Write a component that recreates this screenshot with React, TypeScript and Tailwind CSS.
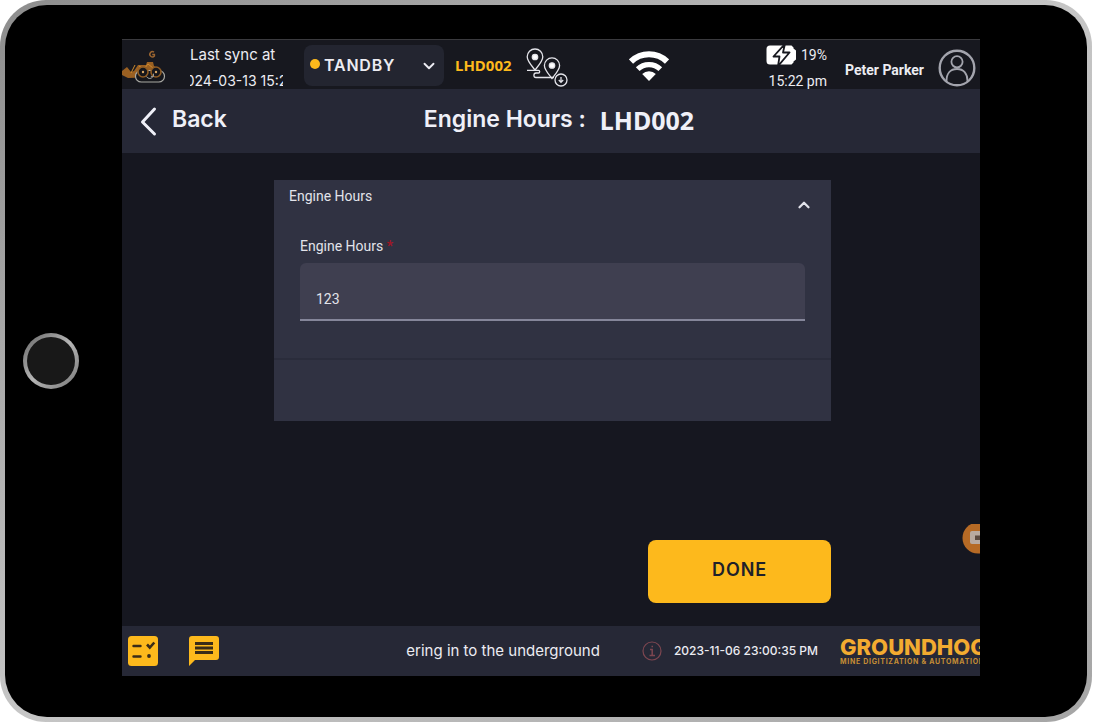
import { useState } from "react";
import { ChevronDown, ChevronUp } from "lucide-react";

function LoaderLogo() {
  return (
    <svg viewBox="0 0 44 38" className="h-[38px] w-11 shrink-0" aria-hidden="true">
      <path d="M32 3.200a2.600 2.600 0 1 0 .4 3.800V5.500h-2.200" fill="none" stroke="#9a6430" strokeWidth="1.500" />
      <path d="M0 26V22l5-4 4 5 3-1 4-6h8l1-3h6l1 4 6 4 2 6-4 1-30 1z" fill="#9a6022" />
      <path d="M9 24l4-8M17 17l5 3 4-5 5 4" stroke="#d08a2c" strokeWidth="1" fill="none" />
      <rect x="13.500" y="21.500" width="29" height="11.500" rx="5.700" fill="#15161b" stroke="#a9a9a4" strokeWidth="1.200" />
      <circle cx="21" cy="23" r="5" fill="#15161b" stroke="#8f5c24" strokeWidth="1.600" />
      <circle cx="34" cy="23" r="5" fill="#15161b" stroke="#8f5c24" strokeWidth="1.600" />
      <circle cx="21" cy="23" r="1.200" fill="#d9a766" />
      <circle cx="34" cy="23" r="1.200" fill="#d9a766" />
      <path d="M24.500 27.500a3.600 3.600 0 0 0 6.600-.3M31.500 24.600v2.800h-2.600" fill="none" stroke="#9a9a96" strokeWidth="1" />
    </svg>
  );
}

function RouteIcon() {
  return (
    <svg viewBox="0 0 42 40" className="h-10 w-[42px] shrink-0" fill="none" stroke="#e4e4ea" strokeWidth="1.300" aria-hidden="true">
      <path d="M9 22C5 17 1.200 13 1.200 8.800a7.800 7.800 0 0 1 15.600 0C16.800 13 13 17 9 22z" />
      <path d="M26 30.500c-4-5-7.600-8.800-7.600-13a7.600 7.600 0 0 1 15.200 0c0 4.200-3.600 8-7.600 13z" />
      <circle cx="9" cy="9" r="2.700" fill="#fff" />
      <circle cx="26" cy="17.500" r="2.700" fill="#fff" />
      <path d="M1 22.300h11.500c1.600 0 1.600 2.700 0 2.700H10c-2.800 0-2.800 4.500 0 4.500h18" />
      <circle cx="35" cy="32" r="6" />
      <path d="M35 29v5M32.800 32l2.200 2.400 2.200-2.400" />
    </svg>
  );
}

function WifiIcon() {
  return (
    <svg viewBox="0 0 40 30" className="h-[30px] w-10 shrink-0" fill="none" stroke="#fff" aria-label="Wi-Fi">
      <path d="M2 10.500a26 26 0 0 1 36 0" strokeWidth="6" />
      <path d="M8.700 18.200a16 16 0 0 1 22.600 0" strokeWidth="5.200" />
      <path d="M20 30l-6.800-6.900a9.600 9.600 0 0 1 13.600 0z" fill="#fff" stroke="none" />
    </svg>
  );
}

function BatteryIcon() {
  return (
    <svg viewBox="0 0 31 24" className="h-6 w-[31px] shrink-0" aria-hidden="true">
      <path d="M4 2.500h21.500l2 2v1l2.500 2v9l-2.500 2v1l-2 2H4a3.500 3.500 0 0 1-3.500-3.500V6A3.500 3.500 0 0 1 4 2.500z" fill="#fff" />
      <path d="M19 .8L7.500 13.500h6L12 23.200l11.500-13.700h-6.500z" fill="#fff" stroke="#17181f" strokeWidth="1.800" strokeLinejoin="round" />
    </svg>
  );
}

function UserIcon() {
  return (
    <svg viewBox="0 0 38 38" className="h-[38px] w-[38px]" fill="none" stroke="#a3a4ad" aria-hidden="true">
      <circle cx="19" cy="19" r="17.300" strokeWidth="2.400" />
      <circle cx="19" cy="12.800" r="5.600" strokeWidth="1.800" />
      <path d="M8.500 32c0-7.500 4-12 10.500-12s10.500 4.500 10.500 12" strokeWidth="1.800" />
    </svg>
  );
}

function ChecklistIcon() {
  return (
    <svg viewBox="0 0 30 30" className="h-[30px] w-[30px]" aria-hidden="true">
      <rect width="30" height="30" rx="3.500" fill="#fdb91c" />
      <path d="M5.500 10h7M5.500 20.500h7" stroke="#3a2c18" strokeWidth="2.400" strokeLinecap="round" />
      <path d="M19 8.500l2.800 3 4.500-5" stroke="#3a2c18" strokeWidth="2.600" fill="none" />
      <circle cx="21" cy="20" r="1.900" fill="#3a2c18" />
    </svg>
  );
}

function MessageIcon() {
  return (
    <svg viewBox="0 0 30 30" className="h-[30px] w-[30px]" aria-hidden="true">
      <path d="M3 0h24a3 3 0 0 1 3 3v18a3 3 0 0 1-3 3H6l-6 6V3a3 3 0 0 1 3-3z" fill="#fdb91c" />
      <path d="M6 7.500h18M6 12h18M6 16.500h18" stroke="#3a2c18" strokeWidth="2.800" />
    </svg>
  );
}

function TopBar() {
  const [status, setStatus] = useState("TANDBY");

  return (
    <header className="flex h-[50px] items-center border-t border-[#3a3a3e] bg-[#17181f] pr-1 pt-1.5 text-[#ececf2]">
      <LoaderLogo />
      <div className="ml-6 w-[93px] shrink-0 overflow-hidden whitespace-nowrap text-[15px] leading-[26px]">
        <p>Last sync at</p>
        <p className="flex justify-center text-sm leading-[26px]">2024-03-13 15:22</p>
      </div>
      <div className="relative ml-[21px] w-[140px] shrink-0 pb-1">
        <span className="absolute left-1.5 top-3.5 size-2.5 rounded-full bg-[#fdb91c]" />
        <select
          aria-label="Status"
          value={status}
          onChange={(e) => setStatus(e.target.value)}
          className="h-[41px] w-full appearance-none rounded-lg bg-[#232530] pb-0.5 pl-5 text-base font-semibold tracking-wider"
        >
          <option>TANDBY</option>
        </select>
        <ChevronDown className="pointer-events-none absolute right-1.5 top-3 size-[18px]" strokeWidth={2.5} />
      </div>
      <span className="ml-[11px] mr-3.5 pb-1 font-['Noto_Sans'] text-[15px] font-bold text-[#fdb91c]">LHD002</span>
      <RouteIcon />
      <div className="flex flex-1 items-center justify-center pb-1 pr-9">
        <WifiIcon />
      </div>
      <div className="flex flex-col items-end font-['Roboto'] leading-[26px]">
        <div className="flex items-center gap-1 text-sm leading-[26px]">
          <BatteryIcon />
          <span>19%</span>
        </div>
        <time className="text-sm leading-[26px]">15:22 pm</time>
      </div>
      <span className="ml-[18px] pt-1 font-['Roboto'] text-sm font-bold">Peter Parker</span>
      <button type="button" aria-label="Profile" className="ml-3.5">
        <UserIcon />
      </button>
    </header>
  );
}

function TitleBar() {
  return (
    <div className="grid h-16 grid-cols-[1fr_auto_1fr] items-center bg-[#262836] pl-4 text-[#eff0f8]">
      <button type="button" className="flex items-center gap-3 justify-self-start text-[23px] font-semibold">
        <svg viewBox="0 0 22 32" className="h-8 w-[22px]" fill="none" stroke="currentColor" strokeWidth="3" strokeLinecap="round" strokeLinejoin="round" aria-hidden="true">
          <path d="M16.500 4L4.500 17l12 12" />
        </svg>
        <span className="pb-1">Back</span>
      </button>
      <h1 className="flex items-center gap-3.5 text-[23px] font-semibold">
        <span className="pb-1">Engine Hours :</span>
        <span className="font-['Noto_Sans'] text-[25px] font-bold">LHD002</span>
      </h1>
    </div>
  );
}

function EngineHoursCard() {
  const [open, setOpen] = useState(true);
  const [hours, setHours] = useState("123");

  return (
    <section className="bg-[#303242] font-['Roboto'] text-sm text-[#e2e3ea]">
      <button type="button" onClick={() => setOpen(!open)} className="flex h-12 w-full justify-between pl-[15px] pr-[18px]">
        <span className="pt-1.5">Engine Hours</span>
        <ChevronUp className="mt-4 size-[18px]" strokeWidth={3} />
      </button>
      {open && (
        <div className="h-[130px] px-[26px] pt-2">
          <label htmlFor="hours" className="block h-[27px] leading-5">
            Engine Hours <span className="font-bold text-[#a01526]">*</span>
          </label>
          <input
            id="hours"
            value={hours}
            onChange={(e) => setHours(e.target.value)}
            className="h-[58px] w-full rounded-t-md border-b-2 border-[#85869a] bg-[#3f3f50] px-4 pt-4 outline-none"
          />
        </div>
      )}
      <div className="h-[63px] border-t-2 border-[#2a2c3b]" />
    </section>
  );
}

function BottomBar() {
  return (
    <footer className="flex h-[50px] items-center overflow-hidden bg-[#262836] pl-1.5 text-[#ececf2]">
      <button type="button" aria-label="Checklist">
        <ChecklistIcon />
      </button>
      <button type="button" aria-label="Messages" className="ml-[31px]">
        <MessageIcon />
      </button>
      <p className="flex-1 whitespace-nowrap text-right text-[15px]">ering in to the underground</p>
      <svg viewBox="0 0 20 20" className="ml-[42px] size-5 shrink-0" fill="none" stroke="#7d4650" aria-hidden="true">
        <circle cx="10" cy="10" r="9" strokeWidth="1.200" />
        <path d="M8 8.500h2.200V14M7.500 14.500h5.500M9.500 5.500h1.500" strokeWidth="1.500" />
      </svg>
      <time className="ml-3 whitespace-nowrap text-xs font-medium">2023-11-06 23:00:35 PM</time>
      <div className="ml-[22px] w-[140px] shrink-0 overflow-hidden whitespace-nowrap text-[#f3ab30]">
        <p className="text-[22px] font-extrabold leading-[22px]">GROUNDHOG</p>
        <p className="text-[7px] font-bold leading-2 tracking-widest text-[#c58d35]">MINE DIGITIZATION &amp; AUTOMATION</p>
      </div>
    </footer>
  );
}

export default function App() {
  return (
    <div className="h-screen bg-white pb-px pr-px font-['Inter',sans-serif]">
      {/* Tablet body */}
      <div className="h-full rounded-[46px] bg-linear-to-br from-[#8d8d8d] via-[#c6c6c6] to-[#a5a5a5] p-[5px]">
        <div className="flex h-full rounded-[42px] bg-black pb-[41px] pr-[107px] pt-[34px]">
          <div className="flex w-[117px] shrink-0 items-center pl-[18px] pt-1.5">
            <button type="button" aria-label="Home" className="size-14 rounded-full bg-linear-to-br from-[#666] via-[#b5b5b5] to-[#777] p-1">
              <span className="block size-full rounded-full bg-[#181818]" />
            </button>
          </div>

          {/* Screen */}
          <div className="relative flex min-w-0 flex-1 flex-col overflow-hidden bg-[#161720]">
            <TopBar />
            <TitleBar />
            <main className="flex flex-1 flex-col pb-[23px] pl-[152px] pr-[149px] pt-[27px]">
              <EngineHoursCard />
              <button type="button" className="mt-auto h-[63px] w-[183px] self-end rounded-lg bg-[#fdb91c] pb-1 text-lg font-semibold tracking-wider text-[#20202a]">
                DONE
              </button>
            </main>
            <BottomBar />

            {/* Screen recorder bubble, half off the edge */}
            <svg viewBox="0 0 18 30" className="absolute bottom-[122px] right-0 h-[30px] w-[18px]" aria-hidden="true">
              <circle cx="16" cy="14" r="15.500" fill="#b66a25" />
              <path d="M10 7h8v13h-8a2 2 0 0 1-2-2V9a2 2 0 0 1 2-2z" fill="#b9aaa0" />
              <rect x="13" y="11.500" width="5" height="4.500" fill="#5c4a40" />
            </svg>
          </div>
        </div>
      </div>
    </div>
  );
}
